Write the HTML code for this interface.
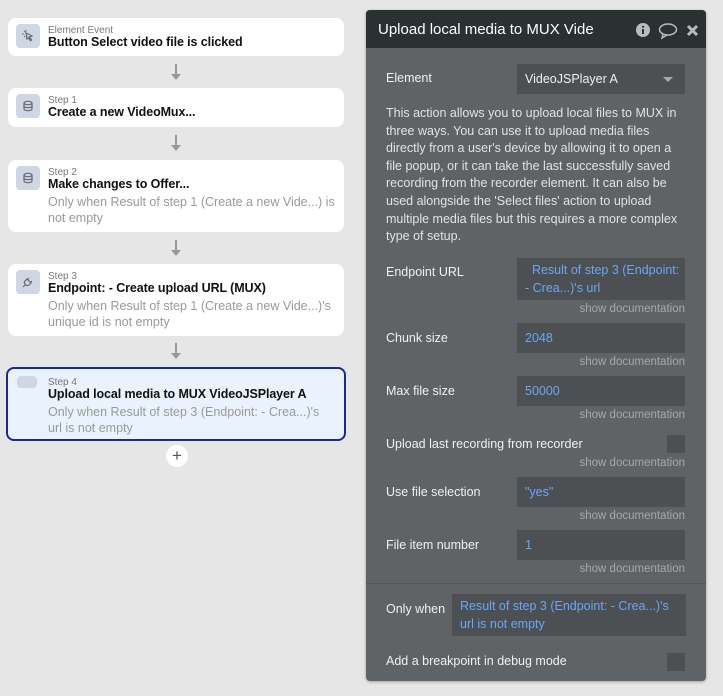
<!DOCTYPE html>
<html><head><meta charset="utf-8"><style>
*{margin:0;padding:0;box-sizing:border-box}
body{width:723px;height:696px;background:#e6e6e6;font-family:"Liberation Sans",sans-serif;position:relative;overflow:hidden}
.card{position:absolute;left:8px;width:336px;background:#fff;border-radius:8px}
.ic{position:absolute;left:8px;top:6px;width:24px;height:24px;background:#cfd8e2;border-radius:4px;display:flex;align-items:center;justify-content:center}
.lb{position:absolute;left:40px;top:7px;font-size:10px;color:#777}
.tt{position:absolute;left:40px;top:17px;font-size:12.5px;color:#111;font-weight:bold;letter-spacing:-0.1px}
.cd{position:absolute;left:40px;top:34px;font-size:12.5px;color:#9a9a9a;line-height:16px;width:290px}
.arr{position:absolute;left:175px;width:2px;height:12px;background:#999}
.arr:after{content:"";position:absolute;left:-4px;top:10px;border-left:5px solid transparent;border-right:5px solid transparent;border-top:6px solid #999}
.p{position:absolute;left:366px;top:10px;width:340px;height:671px;background:#5f6366;border-radius:4px;box-shadow:0 1px 3px rgba(0,0,0,.3);overflow:hidden}
.hd{position:absolute;left:0;top:0;width:340px;height:38px;background:#2b3033}
.t{position:absolute;font-size:12.5px;color:#f0f0f0}
.in{position:absolute;background:#4d5053;color:#6aa6f5;font-size:12.5px;padding:0 8px;line-height:18px;white-space:nowrap}
.sd{position:absolute;right:21px;font-size:11.5px;color:#a8a8a8}
.cb{position:absolute;left:301px;width:18px;height:18px;background:#4d5053}
</style></head><body>

<div class="card" style="top:18px;height:38px"><div class="ic"><svg width="14" height="14" viewBox="0 0 14 14" fill="none" stroke="#667" stroke-width="1.2"><path d="M5 4l6 3-2.5 1 2 3-1 .8-2-3L6 10z"/><path d="M3 2l1 1M1 5h1.5M3 8l1-1M5 1v1.5"/></svg></div><div class="lb">Element Event</div><div class="tt">Button Select video file is clicked</div></div>
<div class="arr" style="top:64px"></div>
<div class="card" style="top:88px;height:39px"><div class="ic"><svg width="12" height="12" viewBox="0 0 12 12" fill="none" stroke="#667" stroke-width="1.2"><ellipse cx="6" cy="3" rx="4" ry="1.7"/><path d="M2 3v6c0 1 1.8 1.7 4 1.7s4-.7 4-1.7V3M2 6c0 1 1.8 1.7 4 1.7S10 7 10 6"/></svg></div><div class="lb">Step 1</div><div class="tt">Create a new VideoMux...</div></div>
<div class="arr" style="top:135px"></div>
<div class="card" style="top:160px;height:72px"><div class="ic"><svg width="12" height="12" viewBox="0 0 12 12" fill="none" stroke="#667" stroke-width="1.2"><ellipse cx="6" cy="3" rx="4" ry="1.7"/><path d="M2 3v6c0 1 1.8 1.7 4 1.7s4-.7 4-1.7V3M2 6c0 1 1.8 1.7 4 1.7S10 7 10 6"/></svg></div><div class="lb">Step 2</div><div class="tt">Make changes to Offer...</div><div class="cd">Only when Result of step 1 (Create a new Vide...) is<br>not empty</div></div>
<div class="arr" style="top:240px"></div>
<div class="card" style="top:264px;height:72px"><div class="ic"><svg width="14" height="14" viewBox="0 0 14 14" fill="none" stroke="#667" stroke-width="1.2"><path d="M6 4l4 4-2 2a2 2 0 01-3 0l-1-1a2 2 0 010-3z M8 3l-1.5 1.5M11 6l-1.5 1.5M4.5 9.5L2 12"/></svg></div><div class="lb">Step 3</div><div class="tt">Endpoint: - Create upload URL (MUX)</div><div class="cd">Only when Result of step 1 (Create a new Vide...)'s<br>unique id is not empty</div></div>
<div class="arr" style="top:343px"></div>
<div class="card" style="top:367px;left:6px;width:340px;height:74px;background:#eaf2fd;border:2px solid #1a2b8c"><div class="ic" style="left:9px;top:7px;height:12px;width:20px"></div><div class="lb" style="left:40px;top:8px">Step 4</div><div class="tt" style="left:40px;top:18px">Upload local media to MUX VideoJSPlayer A</div><div class="cd" style="left:40px;top:35px">Only when Result of step 3 (Endpoint: - Crea...)'s<br>url is not empty</div></div>
<div style="position:absolute;left:166px;top:445px;width:22px;height:22px;border-radius:50%;background:#fff;text-align:center;line-height:21px;font-size:17px;color:#555">+</div>

<div class="p">
<div class="hd"><div class="t" style="left:12px;top:11px;font-size:15px;color:#fff">Upload local media to MUX Vide</div>
<svg style="position:absolute;left:270px;top:13px" width="14" height="14" viewBox="0 0 14 14"><circle cx="7" cy="7" r="7" fill="#b8bcbf"/><rect x="6" y="6" width="2" height="5" fill="#2b3033"/><circle cx="7" cy="3.8" r="1.1" fill="#2b3033"/></svg>
<svg style="position:absolute;left:292px;top:13px" width="20" height="17" viewBox="0 0 20 17" fill="none" stroke="#b8bcbf" stroke-width="1.5"><ellipse cx="10" cy="6.5" rx="8.5" ry="5.5"/><path d="M5 11l-1 4 5-3"/></svg>
<svg style="position:absolute;left:320px;top:14px" width="13" height="13" viewBox="0 0 13 13" stroke="#b8bcbf" stroke-width="3"><path d="M2 2l9 9M11 2l-9 9"/></svg>
</div>
<div class="t" style="left:20px;top:61px">Element</div>
<div class="in" style="left:151px;top:54px;width:168px;height:30px;line-height:30px;color:#f0f0f0">VideoJSPlayer A<span style="position:absolute;right:12px;top:13px;border-left:5px solid transparent;border-right:5px solid transparent;border-top:5px solid #aaa"></span></div>
<div class="t" style="left:20px;top:95px;width:320px;line-height:17.6px;color:#e2e2e2;white-space:nowrap">This action allows you to upload local files to MUX in<br>three ways. You can use it to upload media files<br>directly from a user's device by allowing it to open a<br>file popup, or it can take the last successfully saved<br>recording from the recorder element. It can also be<br>used alongside the 'Select files' action to upload<br>multiple media files but this requires a more complex<br>type of setup.</div>
<div class="t" style="left:20px;top:255px">Endpoint URL</div>
<div class="in" style="left:151px;top:248px;width:168px;height:42px;padding-top:3px">&nbsp;&nbsp;Result of step 3 (Endpoint:<br>- Crea...)'s url</div>
<div class="sd" style="top:293px">show documentation</div>
<div class="t" style="left:20px;top:321px">Chunk size</div>
<div class="in" style="left:151px;top:313px;width:168px;height:30px;line-height:30px">2048</div>
<div class="sd" style="top:346px">show documentation</div>
<div class="t" style="left:20px;top:374px">Max file size</div>
<div class="in" style="left:151px;top:366px;width:168px;height:30px;line-height:30px">50000</div>
<div class="sd" style="top:399px">show documentation</div>
<div class="t" style="left:20px;top:427px">Upload last recording from recorder</div>
<div class="cb" style="top:425px"></div>
<div class="sd" style="top:447px">show documentation</div>
<div class="t" style="left:20px;top:475px">Use file selection</div>
<div class="in" style="left:151px;top:467px;width:168px;height:30px;line-height:30px">"yes"</div>
<div class="sd" style="top:500px">show documentation</div>
<div class="t" style="left:20px;top:528px">File item number</div>
<div class="in" style="left:151px;top:520px;width:168px;height:30px;line-height:30px">1</div>
<div class="sd" style="top:553px">show documentation</div>
<div style="position:absolute;left:0;top:573px;width:340px;height:1px;background:#53575a"></div>
<div class="t" style="left:20px;top:592px">Only when</div>
<div class="in" style="left:86px;top:584px;width:234px;height:42px;padding-top:3px">Result of step 3 (Endpoint: - Crea...)'s<br>url is not empty</div>
<div class="t" style="left:20px;top:644px">Add a breakpoint in debug mode</div>
<div class="cb" style="top:643px"></div>
</div>
</body></html>
